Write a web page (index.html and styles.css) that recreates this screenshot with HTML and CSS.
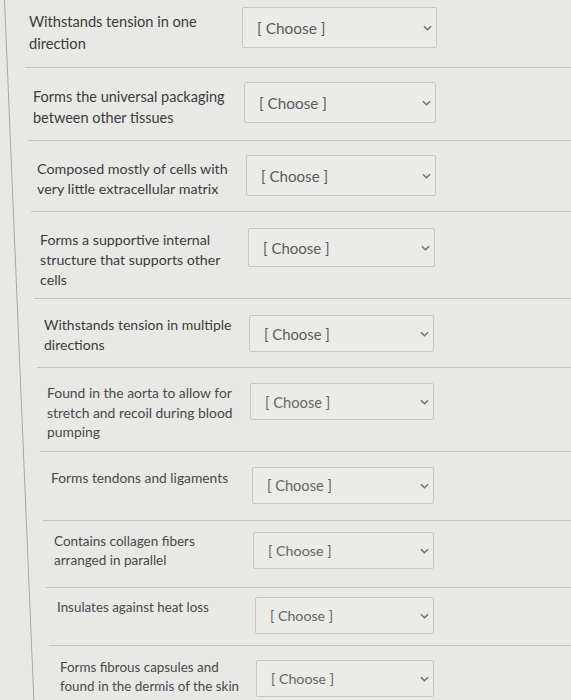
FILE: index.html
```html
<!DOCTYPE html>
<html lang="en">
<head>
<meta charset="utf-8">
<title>Matching</title>
<link rel="stylesheet" href="styles.css">
</head>
<body>
<main class="quiz">
  <div class="row">
    <p class="label">Withstands tension in one direction</p>
    <div class="select"><span>[ Choose ]</span><svg class="chev" viewBox="0 0 10 6"><path d="M1 1l4 4 4-4"/></svg></div>
  </div>
  <div class="row">
    <p class="label">Forms the universal packaging between other tissues</p>
    <div class="select"><span>[ Choose ]</span><svg class="chev" viewBox="0 0 10 6"><path d="M1 1l4 4 4-4"/></svg></div>
  </div>
  <div class="row">
    <p class="label">Composed mostly of cells with very little extracellular matrix</p>
    <div class="select"><span>[ Choose ]</span><svg class="chev" viewBox="0 0 10 6"><path d="M1 1l4 4 4-4"/></svg></div>
  </div>
  <div class="row">
    <p class="label">Forms a supportive internal structure that supports other cells</p>
    <div class="select"><span>[ Choose ]</span><svg class="chev" viewBox="0 0 10 6"><path d="M1 1l4 4 4-4"/></svg></div>
  </div>
  <div class="row">
    <p class="label">Withstands tension in multiple directions</p>
    <div class="select"><span>[ Choose ]</span><svg class="chev" viewBox="0 0 10 6"><path d="M1 1l4 4 4-4"/></svg></div>
  </div>
  <div class="row">
    <p class="label">Found in the aorta to allow for stretch and recoil during blood pumping</p>
    <div class="select"><span>[ Choose ]</span><svg class="chev" viewBox="0 0 10 6"><path d="M1 1l4 4 4-4"/></svg></div>
  </div>
  <div class="row">
    <p class="label">Forms tendons and ligaments</p>
    <div class="select"><span>[ Choose ]</span><svg class="chev" viewBox="0 0 10 6"><path d="M1 1l4 4 4-4"/></svg></div>
  </div>
  <div class="row">
    <p class="label">Contains collagen fibers arranged in parallel</p>
    <div class="select"><span>[ Choose ]</span><svg class="chev" viewBox="0 0 10 6"><path d="M1 1l4 4 4-4"/></svg></div>
  </div>
  <div class="row">
    <p class="label">Insulates against heat loss</p>
    <div class="select"><span>[ Choose ]</span><svg class="chev" viewBox="0 0 10 6"><path d="M1 1l4 4 4-4"/></svg></div>
  </div>
  <div class="row">
    <p class="label">Forms fibrous capsules and found in the dermis of the skin</p>
    <div class="select"><span>[ Choose ]</span><svg class="chev" viewBox="0 0 10 6"><path d="M1 1l4 4 4-4"/></svg></div>
  </div>
</main>
</body>
</html>
```
FILE: styles.css
```css
html, body {
  margin: 0;
  padding: 0;
}
body {
  background: #e8e8e5;
  font-family: Lato, "Open Sans", sans-serif;
  color: #3c3c3c;
  width: 571px;
  height: 700px;
  overflow: hidden;
}
.quiz {
  position: relative;
  height: 700px;
}
.quiz::before {
  content: "";
  position: absolute;
  left: 4px;
  top: 0;
  width: 1px;
  height: 720px;
  background: #a9a9a7;
  transform-origin: 0 0;
  transform: rotate(-2.4deg);
}
.row {
  display: flex;
  align-items: flex-start;
  box-sizing: border-box;
  height: var(--h);
  margin-left: var(--ds);
  padding-left: calc(var(--tx) - var(--ds));
  border-bottom: 1px solid #c4c4c1;
}
.label {
  margin: 0;
  margin-top: var(--lt);
  width: calc(var(--sx) - var(--tx));
  flex: none;
  padding-right: 10px;
  box-sizing: border-box;
  font-size: var(--fs);
  line-height: var(--lh);
}
.select {
  flex: none;
  box-sizing: border-box;
  margin-top: var(--st);
  width: calc(var(--sr) - var(--sx));
  height: var(--sh);
  border: 1px solid #c6c6c3;
  border-radius: 2px;
  background: #ebebe8;
  display: flex;
  align-items: center;
  justify-content: space-between;
  padding: 0 4px 0 14px;
  color: #5c5c5c;
  font-size: calc(var(--fs) + 0.8px);
}
.chev {
  width: 9px;
  height: 6px;
  fill: none;
  stroke: #6f6f6f;
  stroke-width: 1.6;
}
.row:nth-child(1)  { --h: 68px; --ds: 25px; --tx: 29px; --sx: 242px; --sr: 437px; --st: 7px;  --sh: 41px; --lt: 11px; --lh: 22px; --fs: 14.6px; }
.row:nth-child(2)  { --h: 73px; --ds: 28px; --tx: 33px; --sx: 244px; --sr: 436px; --st: 14px; --sh: 41px; --lt: 18px; --lh: 21px; --fs: 14.5px; }
.row:nth-child(3)  { --h: 71px; --ds: 31px; --tx: 37px; --sx: 246px; --sr: 436px; --st: 14px; --sh: 41px; --lt: 18px; --lh: 20px; --fs: 14.3px; }
.row:nth-child(4)  { --h: 87px; --ds: 34px; --tx: 40px; --sx: 248px; --sr: 435px; --st: 16px; --sh: 39px; --lt: 18px; --lh: 20px; --fs: 14.2px; }
.row:nth-child(5)  { --h: 69px; --ds: 37px; --tx: 44px; --sx: 249px; --sr: 434px; --st: 16px; --sh: 37px; --lt: 16px; --lh: 20px; --fs: 14px; }
.row:nth-child(6)  { --h: 84px; --ds: 40px; --tx: 47px; --sx: 250px; --sr: 434px; --st: 15px; --sh: 37px; --lt: 15px; --lh: 19.5px; --fs: 13.9px; }
.row:nth-child(7)  { --h: 69px; --ds: 43px; --tx: 51px; --sx: 252px; --sr: 434px; --st: 15px; --sh: 37px; --lt: 16px; --lh: 19.5px; --fs: 13.8px; }
.row:nth-child(8)  { --h: 67px; --ds: 46px; --tx: 54px; --sx: 253px; --sr: 434px; --st: 11px; --sh: 37px; --lt: 11px; --lh: 18.5px; --fs: 13.5px; }
.row:nth-child(9)  { --h: 58px; --ds: 49px; --tx: 57px; --sx: 255px; --sr: 434px; --st: 9px;  --sh: 37px; --lt: 10px; --lh: 18.5px; --fs: 13.4px; }
.row:nth-child(10) { --h: 56px; --ds: 52px; --tx: 60px; --sx: 256px; --sr: 434px; --st: 14px; --sh: 37px; --lt: 12px; --lh: 19px; --fs: 13.4px; border-bottom: none; }
.row:nth-child(n+6) { color: #4a4a4a; }
.row:nth-child(n+6) .select { color: #666; }
```
